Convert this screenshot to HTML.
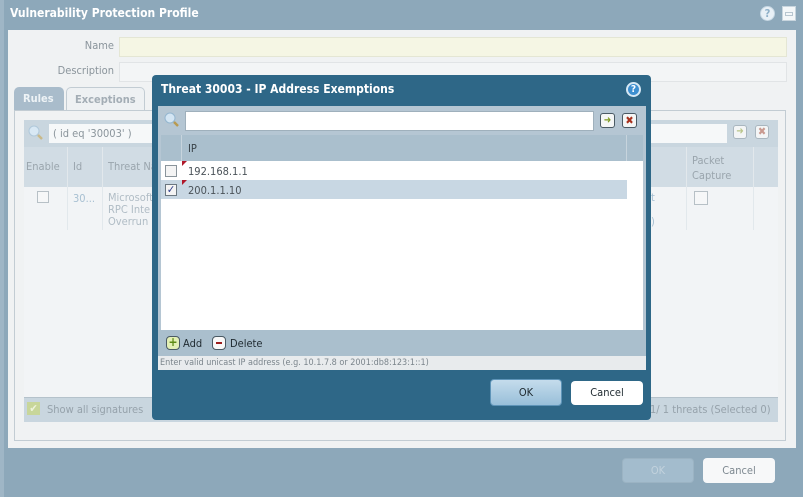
<!DOCTYPE html>
<html><head><style>
*{box-sizing:border-box;margin:0;padding:0}
body{width:803px;height:497px;overflow:hidden;background:#8da8ba;font-family:"DejaVu Sans Condensed","Liberation Sans",sans-serif;font-size:11px;position:relative;color:#333}
.a{position:absolute}
.lbl{color:#8a949b;font-size:11px}
.gt{color:#b0bcc5}
.mag{position:absolute;width:16px;height:16px}
</style></head><body>
<div class="a" style="left:0;top:0;width:4px;height:497px;background:#9fb6c6"></div>
<div class="a" style="left:10px;top:6px;color:#fff;font-weight:bold;font-size:12px;font-family:'DejaVu Sans Condensed','Liberation Sans',sans-serif">Vulnerability Protection Profile</div>
<div class="a" style="left:760px;top:6px;width:15px;height:15px;border-radius:50%;background:#e8f0f6;border:1px solid #c6d7e3;color:#8fb0c8;font-size:11px;font-weight:bold;text-align:center;line-height:13px">?</div>
<div class="a" style="left:782px;top:6px;width:14px;height:15px;background:#f4f7f9;border:1px solid #c8d5de"><div style="margin:5px 2px 0;height:4px;border:1px solid #b8c6d0"></div></div>
<div class="a" style="left:8px;top:30px;width:788px;height:418px;background:#f0f2f3"></div>
<div class="a lbl" style="left:60px;top:39px;width:54px;text-align:right">Name</div>
<div class="a" style="left:119px;top:37px;width:668px;height:20px;background:#f5f6e4;border:1px solid #e4e6d4"></div>
<div class="a lbl" style="left:40px;top:64px;width:74px;text-align:right">Description</div>
<div class="a" style="left:119px;top:62px;width:668px;height:20px;background:#f3f5f6;border:1px solid #e1e4e6"></div>
<div class="a" style="left:14px;top:87px;width:50px;height:24px;background:#a9bccb;border-radius:5px 5px 0 0;color:#eef3f6;font-weight:bold;font-size:11px;padding:5px 0 0 9px">Rules</div>
<div class="a" style="left:66px;top:87px;width:79px;height:24px;background:#eef1f3;border:1px solid #c2ccd3;border-bottom:none;border-radius:5px 5px 0 0;color:#a3adb5;font-weight:bold;padding:5px 0 0 8px">Exceptions</div>
<div class="a" style="left:14px;top:110px;width:772px;height:331px;border:1px solid #c2ccd3"></div>
<div class="a" style="left:24px;top:120px;width:754px;height:302px;background:#f2f4f6"></div>
<div class="a" style="left:24px;top:120px;width:754px;height:27px;background:#c9d6df"></div>
<svg class="mag" style="left:28px;top:125px" viewBox="0 0 16 16"><circle cx="6" cy="6" r="5" fill="#d8e8f4" stroke="#b0c8da"/><line x1="10" y1="10" x2="14" y2="14" stroke="#c9b98a" stroke-width="2.5"/></svg>
<div class="a" style="left:49px;top:124px;width:678px;height:19px;background:#f6f8f9;color:#8a949b;padding:3px 4px">( id eq '30003' )</div>
<div class="a" style="left:733px;top:125px;width:14px;height:14px;border:1px solid #a9b6bf;border-radius:3px;background:#f3f5f6;color:#b9c58a;font-size:10px;text-align:center;line-height:12px">➜</div>
<div class="a" style="left:755px;top:125px;width:14px;height:14px;border:1px solid #a9b6bf;border-radius:3px;background:#f3f5f6;color:#c99a90;font-size:11px;font-weight:bold;text-align:center;line-height:12px">✖</div>
<div class="a" style="left:24px;top:147px;width:754px;height:40px;background:#d1dce4"></div>
<div class="a" style="left:67px;top:147px;width:1px;height:83px;background:#e2e8ec"></div>
<div class="a" style="left:102px;top:147px;width:1px;height:83px;background:#e2e8ec"></div>
<div class="a" style="left:686px;top:147px;width:1px;height:83px;background:#e2e8ec"></div>
<div class="a" style="left:753px;top:147px;width:1px;height:83px;background:#e2e8ec"></div>
<div class="a gt" style="left:26px;top:160px;color:#9aa5ad">Enable</div>
<div class="a gt" style="left:73px;top:160px;color:#9aa5ad">Id</div>
<div class="a gt" style="left:108px;top:160px;color:#9aa5ad">Threat Na</div>
<div class="a gt" style="left:692px;top:153px;color:#9aa5ad;line-height:15px">Packet<br>Capture</div>
<div class="a" style="left:37px;top:191px;width:12px;height:12px;border:1px solid #b7c0c6;background:#f6f7f8"></div>
<div class="a" style="left:694px;top:191px;width:14px;height:14px;border:1px solid #b7c0c6;background:#f6f7f8"></div>
<div class="a gt" style="left:73px;top:192px;color:#a8c0d2">30...</div>
<div class="a gt" style="left:108px;top:192px;line-height:12px">Microsoft<br>RPC Inte<br>Overrun</div>
<div class="a gt" style="left:651px;top:192px;line-height:12px;color:#a8c0d2">t<br><br>)</div>
<div class="a" style="left:24px;top:397px;width:754px;height:25px;background:#c9d6df;border-top:1px solid #b5c2cb"></div>
<div class="a" style="left:27px;top:402px;width:13px;height:13px;background:#c8d69a;color:#eef3dc;font-size:11px;line-height:13px;text-align:center">✔</div>
<div class="a" style="left:47px;top:403px;color:#96a2ab">Show all signatures</div>
<div class="a" style="left:650px;top:403px;color:#96a2ab">1/ 1 threats (Selected 0)</div>
<div class="a" style="left:622px;top:458px;width:72px;height:25px;background:#a3bccd;border-radius:4px;border:1px solid #9bb3c3;color:#c2d2dd;text-align:center;line-height:23px">OK</div>
<div class="a" style="left:703px;top:458px;width:72px;height:25px;background:#f7f8f9;border-radius:4px;color:#7d8890;text-align:center;line-height:25px">Cancel</div>

<div class="a" style="left:152px;top:75px;width:499px;height:345px;background:#2e6787;border-radius:4px"></div>
<div class="a" style="left:161px;top:82px;color:#fff;font-weight:bold;font-size:12px;font-family:'DejaVu Sans Condensed','Liberation Sans',sans-serif">Threat 30003 - IP Address Exemptions</div>
<div class="a" style="left:626px;top:82px;width:15px;height:15px;border-radius:50%;background:#3d8fd0;border:2px solid #d6e8f4;color:#fff;font-size:10px;font-weight:bold;text-align:center;line-height:11px">?</div>
<div class="a" style="left:158px;top:106px;width:488px;height:264px;background:#fff"></div>
<div class="a" style="left:158px;top:106px;width:488px;height:29px;background:#b5c6d3"></div>
<svg class="mag" style="left:164px;top:112px" viewBox="0 0 16 16"><circle cx="6" cy="6" r="5" fill="#d3e5f3" stroke="#94b6cf"/><line x1="10" y1="10" x2="14" y2="14" stroke="#b89a50" stroke-width="2.5"/></svg>
<div class="a" style="left:185px;top:111px;width:409px;height:20px;background:#fff;border:1px solid #9fb0bc"></div>
<div class="a" style="left:600px;top:113px;width:15px;height:15px;border:1px solid #4a5a64;border-radius:3px;background:#f4f6f6;color:#7e9a20;font-size:10px;text-align:center;line-height:13px">➜</div>
<div class="a" style="left:622px;top:113px;width:15px;height:15px;border:1px solid #4a5a64;border-radius:3px;background:#f4f6f6;color:#a8321e;font-size:11px;font-weight:bold;text-align:center;line-height:13px">✖</div>
<div class="a" style="left:161px;top:135px;width:482px;height:26px;background:#aabfcd"></div>
<div class="a" style="left:181px;top:135px;width:1px;height:26px;background:#c7d4dd"></div>
<div class="a" style="left:626px;top:135px;width:1px;height:26px;background:#c7d4dd"></div>
<div class="a" style="left:188px;top:142px;color:#3a4349">IP</div>
<div class="a" style="left:161px;top:180px;width:466px;height:19px;background:#c8d7e3"></div>
<div class="a" style="left:165px;top:165px;width:12px;height:12px;border:1px solid #8a949b;background:#f4f4f4"></div>
<div class="a" style="left:165px;top:184px;width:12px;height:12px;border:1px solid #6b7780;background:#f4f4f4;color:#2b3a8a;font-size:11px;line-height:10px;text-align:center">✓</div>
<div class="a" style="left:182px;top:161px;width:0;height:0;border-top:5px solid #b0182a;border-right:5px solid transparent"></div>
<div class="a" style="left:182px;top:180px;width:0;height:0;border-top:5px solid #b0182a;border-right:5px solid transparent"></div>
<div class="a" style="left:188px;top:165px;color:#4a5258">192.168.1.1</div>
<div class="a" style="left:188px;top:184px;color:#4a5258">200.1.1.10</div>
<div class="a" style="left:643px;top:106px;width:3px;height:264px;background:#b5c6d3"></div>
<div class="a" style="left:158px;top:106px;width:3px;height:264px;background:#b5c6d3"></div>
<div class="a" style="left:158px;top:330px;width:488px;height:26px;background:#aabfcd"></div>
<div class="a" style="left:166px;top:336px;width:14px;height:14px;border:1px solid #4a5a64;border-radius:4px;background:#e3efb6;color:#5c8a14;font-weight:bold;font-size:12px;line-height:11px;text-align:center">+</div>
<div class="a" style="left:183px;top:337px;color:#1f2a30">Add</div>
<div class="a" style="left:212px;top:336px;width:14px;height:14px;border:1px solid #4a5a64;border-radius:4px;background:#f8f8f8"><div style="margin:5px 3px 0;height:2px;background:#9b1c1c"></div></div>
<div class="a" style="left:230px;top:337px;color:#1f2a30">Delete</div>
<div class="a" style="left:158px;top:356px;width:488px;height:14px;background:#e8ebed;color:#7b858c;font-size:9px;padding:2px 2px;line-height:10px">Enter valid unicast IP address (e.g. 10.1.7.8 or 2001:db8:123:1::1)</div>
<div class="a" style="left:490px;top:379px;width:72px;height:27px;background:linear-gradient(#c5dcec,#98bfd9);border:1px solid #5e94b8;border-radius:4px;color:#1f2a30;text-align:center;line-height:25px">OK</div>
<div class="a" style="left:571px;top:381px;width:72px;height:24px;background:#fff;border-radius:4px;color:#1f2a30;text-align:center;line-height:24px">Cancel</div>
</body></html>
